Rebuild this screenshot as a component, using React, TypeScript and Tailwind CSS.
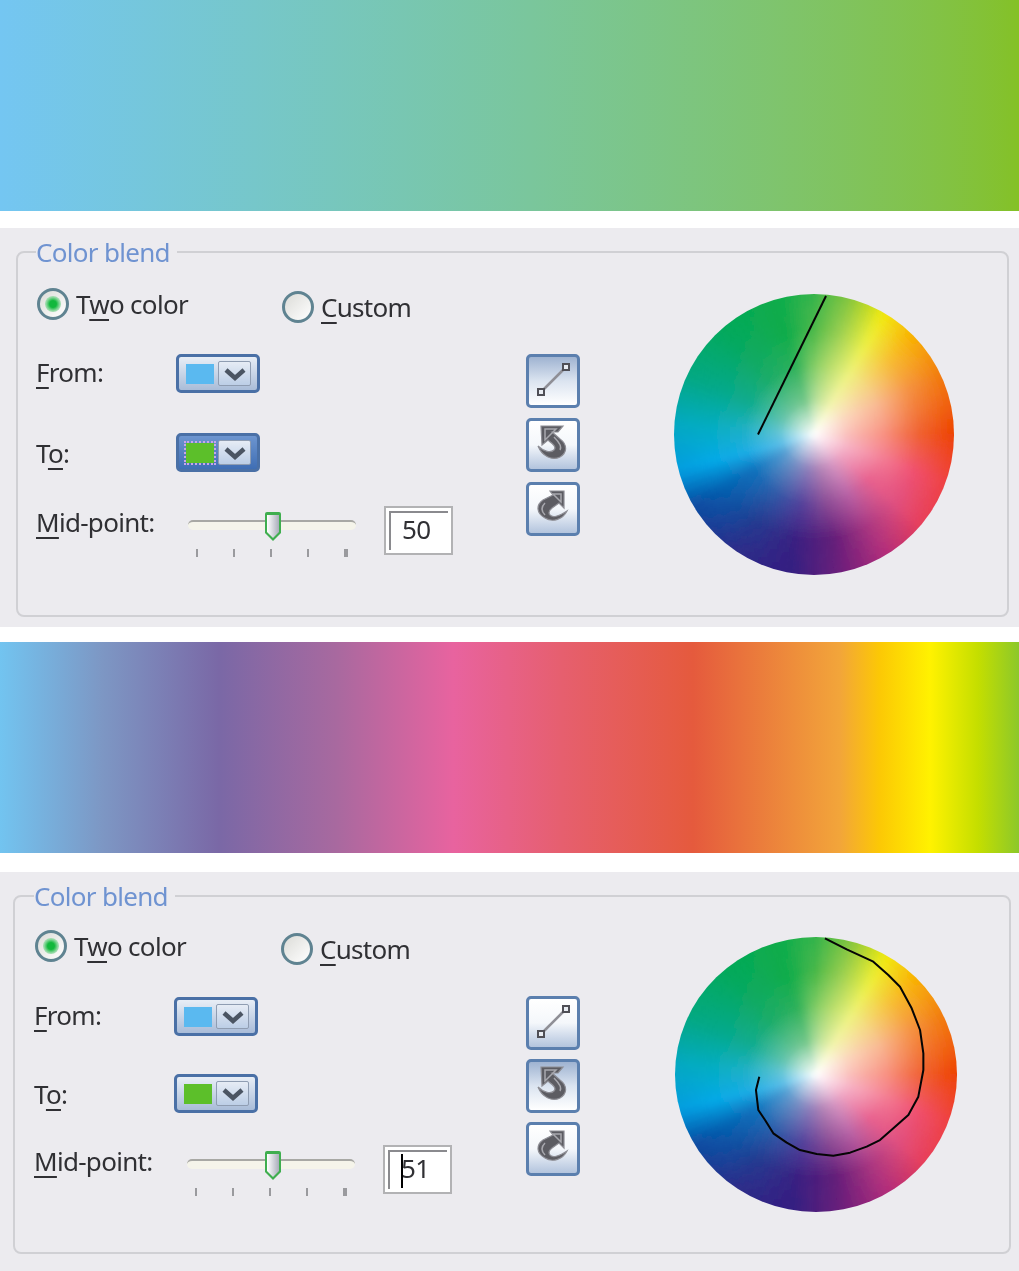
import React, { useMemo } from "react";

const ANGLES: [number, string, string, string, string][] = [
  [0, "#c0e4b0", "#80cc64", "#4cb848", "#35b44a"],
  [15, "#dcedb0", "#bcdf6c", "#9dd050", "#86c63c"],
  [30, "#f5f5c0", "#eef27a", "#eef040", "#f2ea0d"],
  [45, "#faf0d0", "#f5d97f", "#f7c030", "#f9b000"],
  [65, "#fde0d0", "#f9b890", "#f59040", "#f27a0a"],
  [90, "#fbd0d0", "#f89080", "#f06030", "#ee4000"],
  [110, "#f9c8d8", "#f48098", "#f05070", "#ef4040"],
  [130, "#f2bcd6", "#e8608e", "#e04f80", "#e83c58"],
  [150, "#e0a8cc", "#b860a4", "#a83580", "#b02a7a"],
  [170, "#c49ac4", "#8a4a94", "#601a78", "#6a1a7a"],
  [190, "#a898c8", "#54409a", "#3a1f80", "#301a80"],
  [215, "#8aa2cf", "#2c5aa8", "#1f3a90", "#2a2a88"],
  [240, "#6cb0dc", "#0a70bc", "#0060b0", "#0a4aa0"],
  [255, "#70c4e8", "#1aace6", "#00a8e8", "#009ce0"],
  [275, "#7ccdd8", "#1cb0c4", "#00acc0", "#00a8c0"],
  [295, "#80cdb8", "#10ab90", "#00a88a", "#00a880"],
  [320, "#84cda5", "#18ab68", "#08a860", "#00a858"],
  [345, "#8ed09a", "#2cb058", "#0cab48", "#0cab48"],
  [360, "#c0e4b0", "#80cc64", "#4cb848", "#35b44a"],
];

const hex = (h: string) => [1, 3, 5].map((i) => parseInt(h.slice(i, i + 2), 16));
const mix = (a: number[], b: number[], t: number) => a.map((v, i) => v + (b[i] - v) * t);

function colourAt(deg: number, r: number) {
  let i = 0;
  while (i < ANGLES.length - 2 && ANGLES[i + 1][0] <= deg) i++;
  const a0 = ANGLES[i];
  const a1 = ANGLES[i + 1];
  const t = (deg - a0[0]) / (a1[0] - a0[0]);
  const ring = (row: typeof a0, rr: number) => {
    const stops = [[255, 255, 255], mix(hex(row[1]), hex(row[2]), 0.3), hex(row[2]), hex(row[3]), hex(row[4])];
    const p = Math.min(rr * 4, 3.999);
    const k = Math.floor(p);
    return mix(stops[k], stops[k + 1], p - k);
  };
  const c = mix(ring(a0, r), ring(a1, r), t);
  return `rgb(${c.map((v) => Math.round(v)).join(",")})`;
}

function Wheel({ id, w, h, mode }: { id: string; w: string; h: string; mode: "line" | "spiral" }) {
  const cells = useMemo(() => {
    const out: { d: string; c: string }[] = [];
    const R = 146;
    const rings = 24;
    const sectors = 120;
    for (let s = 0; s < sectors; s++) {
      const a0 = (s / sectors) * 2 * Math.PI;
      const a1 = ((s + 1) / sectors) * 2 * Math.PI;
      for (let q = 0; q < rings; q++) {
        const r0 = (q / rings) * R;
        const r1 = ((q + 1) / rings) * R;
        const P = (r: number, a: number) =>
          `${(140 + r * Math.sin(a)).toFixed(2)} ${(140 - r * Math.cos(a)).toFixed(2)}`;
        out.push({
          d: `M${P(r0, a0)}L${P(r1, a0)}L${P(r1, a1)}L${P(r0, a1)}Z`,
          c: colourAt(((s + 0.5) / sectors) * 360, Math.min(((q + 0.5) / rings) * (R / 140), 1)),
        });
      }
    }
    return out;
  }, []);
  return (
    <svg viewBox="0 0 280 280" preserveAspectRatio="none" className={`${w} ${h} block`}>
      <defs>
        <clipPath id={`${id}-clip`}>
          <circle cx="140" cy="140" r="140" />
        </clipPath>
        <filter id={`${id}-blur`} x="-5%" y="-5%" width="110%" height="110%">
          <feGaussianBlur stdDeviation="2" />
        </filter>
      </defs>
      <g clipPath={`url(#${id}-clip)`}>
        <g filter={`url(#${id}-blur)`}>
          {cells.map((c, i) => (
            <path key={i} d={c.d} fill={c.c} stroke={c.c} strokeWidth="0.6" />
          ))}
        </g>
      </g>
      {mode === "line" ? (
        <polyline points="152,2 84,140" fill="none" stroke="#050505" strokeWidth="2" />
      ) : (
        <polyline
          points="148.9,1.4 170.5,12.6 196.9,25.1 211.8,38.7 223.4,50.6 235,72.6 243.3,94.7 246.6,118.4 246.6,135.4 241.6,162.6 231.7,181.2 216.8,194.8 203.5,206.7 190.3,213.5 173.8,219.6 157.2,222.7 140.7,220.9 124.1,216.9 110.9,209.4 97.6,199.9 89.4,186.3 82.7,176.1 80.4,155.8 83.7,142.2"
          fill="none"
          stroke="#050505"
          strokeWidth="2"
          strokeLinejoin="round"
        />
      )}
    </svg>
  );
}

const Key = ({ children }: { children: React.ReactNode }) => (
  <span className="underline decoration-2 underline-offset-[5px]">{children}</span>
);

function Radio({ checked }: { checked?: boolean }) {
  return (
    <span className="flex h-8 w-8 shrink-0 items-center justify-center rounded-full border-[3px] border-[#5f8391] bg-gradient-to-br from-[#dcdcd8] to-white">
      {checked && (
        <span className="h-4 w-4 rounded-full bg-[radial-gradient(circle,#12b83c_30%,#8fd8a0_60%,#e8f4ec_100%)]" />
      )}
    </span>
  );
}

function ColourButton({ swatch, focused }: { swatch: string; focused?: boolean }) {
  return (
    <div
      className={`flex h-[39px] w-[84px] items-center gap-[4px] rounded-[5px] border-[3px] border-[#4a70a6] pl-[7px] pr-[6px] ${
        focused
          ? "bg-gradient-to-b from-[#6d95cf] to-[#3f6eb4]"
          : "bg-gradient-to-b from-[#e8eef6] to-[#a9bcd8]"
      }`}
    >
      <span
        className={`h-[20px] w-[28px] shrink-0 ${swatch} ${
          focused ? "outline-2 outline-dotted outline-[#c9a5e8]" : ""
        }`}
      />
      <span className="flex h-[25px] flex-1 items-center justify-center rounded-[2px] border border-[#8f9db2] bg-gradient-to-b from-[#e6ecf5] to-[#bccee6]">
        <svg viewBox="0 0 24 14" className="h-[14px] w-[24px]">
          <path d="M3 3 L12 11 L21 3" fill="none" stroke="#4b5563" strokeWidth="4.5" />
        </svg>
      </span>
    </div>
  );
}

function ToolButton({ pressed, children }: { pressed?: boolean; children: React.ReactNode }) {
  return (
    <div
      className={`h-[54px] w-[54px] rounded-[5px] border-[3px] border-[#5b7fae] ${
        pressed
          ? "bg-gradient-to-b from-[#9fb3d1] via-[#dbe4f0] to-white"
          : "bg-gradient-to-b from-white via-[#f4f7fb] to-[#b3c4dd]"
      }`}
    >
      <svg viewBox="0 0 54 54" className="-m-[3px] block h-[54px] w-[54px]">
        {children}
      </svg>
    </div>
  );
}

const LineIcon = () => (
  <>
    <path d="M15 38 L40 13" stroke="#8f8f96" strokeWidth="2.5" />
    <rect x="12" y="35" width="6" height="6" fill="#e8ecf2" stroke="#4f4f56" strokeWidth="2" />
    <rect x="37" y="10" width="6" height="6" fill="#e8ecf2" stroke="#4f4f56" strokeWidth="2" />
  </>
);

const ClockIcon = () => (
  <>
    <path
      d="M15 8 L37 8 L32 14 L26 14 L34 21 C42 27 41 35 34 39 C26 43 16 38 12 28 C18 34 25 35 28 32 C31 29 27 26 22 22 L16 27 Z"
      fill="#5c5c62"
      stroke="#8d8d94"
      strokeWidth="1.2"
    />
    <path d="M19 11 L30 11 L19 22 Z M28 19 C33 24 36 29 34 32" fill="none" stroke="#a8a8ae" strokeWidth="1.5" />
  </>
);

const CounterIcon = () => (
  <>
    <path
      d="M24 9 L38 9 L38 26 L33 21 L26 26 C20 31 24 36 31 34 C35 33 38 31 41 29 C37 37 27 41 19 36 C10 31 10 23 17 18 L27 13 Z"
      fill="#5c5c62"
      stroke="#8d8d94"
      strokeWidth="1.2"
    />
    <path d="M27 12 L35 12 L35 20 Z M19 21 C15 25 15 29 19 33" fill="none" stroke="#a8a8ae" strokeWidth="1.5" />
  </>
);

function Slider({ thumbLeft }: { thumbLeft: string }) {
  return (
    <div className="relative h-[50px] w-[168px]">
      <div className="absolute left-0 right-0 top-[8px] h-[10px] rounded-[5px] border-t-2 border-[#a8a8a4] bg-[#f5f4ea]" />
      <svg viewBox="0 0 18 32" className={`absolute -top-px h-[32px] w-[18px] ${thumbLeft}`}>
        <path d="M1 3 Q1 1 3 1 L15 1 Q17 1 17 3 L17 22 L9 30 L1 22 Z" fill="#3fae4f" />
        <path d="M3 4 L15 4 L15 21 L9 27 L3 21 Z" fill="url(#thumbFill)" />
        <defs>
          <linearGradient id="thumbFill" x1="0" x2="1" y1="0" y2="0">
            <stop offset="0" stopColor="#ffffff" />
            <stop offset="1" stopColor="#a9adba" />
          </linearGradient>
        </defs>
      </svg>
      <div className="absolute left-[8px] right-[8px] top-[37px] flex items-start justify-between">
        <span className="h-[8px] w-[2px] bg-[#9a9a9e]" />
        <span className="h-[8px] w-[2px] bg-[#9a9a9e]" />
        <span className="h-[8px] w-[2px] bg-[#9a9a9e]" />
        <span className="h-[8px] w-[2px] bg-[#9a9a9e]" />
        <span className="h-[8px] w-[4px] bg-[#9a9a9e]" />
      </div>
    </div>
  );
}

type PanelConfig = {
  id: string;
  outer: string;
  legend: string;
  left: string;
  radioW: string;
  radioMt: string;
  fromMt: string;
  toMt: string;
  midMt: string;
  midLabel: string;
  toFocused: boolean;
  pressed: number;
  toolsPt: string;
  toolsGap: string;
  wheelBox: string;
  wheelW: string;
  wheelH: string;
  mode: "line" | "spiral";
  value: string;
  caret: boolean;
  thumbLeft: string;
};

function Panel({ c }: { c: PanelConfig }) {
  return (
    <div className={`h-[399px] bg-[#ecebef] blur-[0.7px] ${c.outer}`}>
      <div className="relative flex h-full rounded-[8px] border-2 border-[#d0d0d4]">
        <span
          className={`absolute -top-[17px] bg-[#ecebef] pr-[7px] text-[26px] leading-[32px] tracking-[-0.7px] text-[#6f93d1] ${c.legend}`}
        >
          Color blend
        </span>
        <div className={`flex flex-col text-[26px] leading-[32px] tracking-[-0.7px] text-[#303034] ${c.left}`}>
          <div className={`flex h-[40px] ${c.radioMt}`}>
            <div className={`flex h-[36px] items-center gap-[7px] pl-px ${c.radioW}`}>
              <Radio checked />
              <span>
                T<Key>w</Key>o color
              </span>
            </div>
            <div className="mt-[3px] flex h-[36px] items-center gap-[7px]">
              <Radio />
              <span>
                <Key>C</Key>ustom
              </span>
            </div>
          </div>
          <div className={`flex items-center ${c.fromMt}`}>
            <span className="-mt-[3px] w-[140px]">
              <Key>F</Key>rom:
            </span>
            <ColourButton swatch="bg-[#5ab9f0]" />
          </div>
          <div className={`flex items-center ${c.toMt}`}>
            <span className="w-[140px]">
              T<Key>o</Key>:
            </span>
            <ColourButton swatch="bg-[#5cbf2a]" focused={c.toFocused} />
          </div>
          <div className={`flex items-start ${c.midMt}`}>
            <span className={`flex h-[32px] items-center ${c.midLabel}`}>
              <span>
                <Key>M</Key>id-point:
              </span>
            </span>
            <div className="mt-[6px]">
              <Slider thumbLeft={c.thumbLeft} />
            </div>
            <div className="ml-[28px] h-[49px] w-[69px] border-2 border-[#b2b2b4] bg-white p-[3px]">
              <div className="relative h-full w-full border-l-2 border-t-2 border-[#8a8a8e] pl-[11px] leading-[32px]">
                {c.value}
                {c.caret && (
                  <span className="absolute left-[11px] top-[2px] h-[34px] w-[2px] bg-black" />
                )}
              </div>
            </div>
          </div>
        </div>
        <div className={`flex w-[54px] flex-col ${c.toolsPt} ${c.toolsGap}`}>
          <ToolButton pressed={c.pressed === 0}>
            <LineIcon />
          </ToolButton>
          <ToolButton pressed={c.pressed === 1}>
            <ClockIcon />
          </ToolButton>
          <ToolButton pressed={c.pressed === 2}>
            <CounterIcon />
          </ToolButton>
        </div>
        <div className={c.wheelBox}>
          <Wheel id={c.id} w={c.wheelW} h={c.wheelH} mode={c.mode} />
        </div>
      </div>
    </div>
  );
}

const PANEL_ONE: PanelConfig = {
  id: "wheel-a",
  outer: "pb-[10px] pl-[16px] pr-[10px] pt-[23px]",
  legend: "left-[18px]",
  left: "ml-[18px] w-[490px]",
  radioW: "w-[246px]",
  radioMt: "mt-[33px]",
  fromMt: "mt-[28px]",
  toMt: "mt-[40px]",
  midMt: "mt-[34px]",
  midLabel: "w-[152px]",
  toFocused: true,
  pressed: 0,
  toolsPt: "pt-[101px]",
  toolsGap: "gap-[10px]",
  wheelBox: "ml-[94px] pt-[41px]",
  wheelW: "w-[280px]",
  wheelH: "h-[281px]",
  mode: "line",
  value: "50",
  caret: false,
  thumbLeft: "left-[76px]",
};

const PANEL_TWO: PanelConfig = {
  id: "wheel-b",
  outer: "pb-[17px] pl-[13px] pr-[8px] pt-[23px]",
  legend: "left-[19px]",
  left: "ml-[19px] w-[492px]",
  radioW: "w-[247px]",
  radioMt: "mt-[31px]",
  fromMt: "mt-[29px]",
  toMt: "mt-[38px]",
  midMt: "mt-[32px]",
  midLabel: "w-[153px]",
  toFocused: false,
  pressed: 1,
  toolsPt: "pt-[99px]",
  toolsGap: "gap-[9px]",
  wheelBox: "ml-[95px] pt-[40px]",
  wheelW: "w-[282px]",
  wheelH: "h-[275px]",
  mode: "spiral",
  value: "51",
  caret: true,
  thumbLeft: "left-[77px]",
};

export default function App() {
  return (
    <div className="h-[1271px] w-full overflow-hidden bg-white font-['Noto_Sans','Open_Sans',sans-serif]">
      <div className="h-[211px] bg-gradient-to-r from-[#74c6f2] to-[#84c126]" />
      <div className="mt-[17px]">
        <Panel c={PANEL_ONE} />
      </div>
      <div className="mt-[15px] h-[211px] bg-[linear-gradient(90deg,#72c4f0_0%,#7d97c4_10%,#7a68a6_21.5%,#a8699f_33%,#e8639f_44.5%,#e65f6f_55%,#e55a3d_68%,#f2a53a_82.4%,#fcc805_86.3%,#fff200_91.3%,#c4de00_96%,#8cc82a_100%)]" />
      <div className="mt-[19px]">
        <Panel c={PANEL_TWO} />
      </div>
    </div>
  );
}
